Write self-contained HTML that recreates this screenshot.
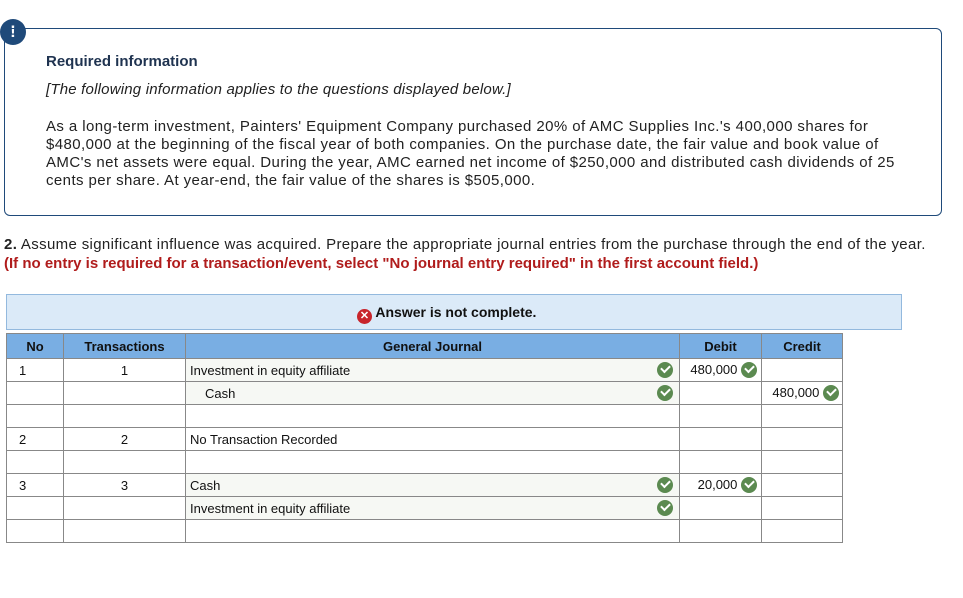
<!DOCTYPE html>
<html><head><style>
body{margin:0;width:963px;height:598px;background:#fff;font-family:"Liberation Sans",Arial,sans-serif;position:relative;overflow:hidden}
.box{position:absolute;left:4px;top:28px;width:936px;height:186px;border:1px solid #1f4a7a;border-radius:6px}
.ic{position:absolute;left:0;top:19px;width:26px;height:26px;border-radius:50%;background:#1f4a7a;color:#fff;font-weight:bold;font-size:17px;text-align:center;line-height:26px}
.t{position:absolute;color:#222;font-size:15px;white-space:nowrap}
table{position:absolute;left:6px;top:333px;border-collapse:collapse;font-size:13px;color:#111;table-layout:fixed;width:836px}
td{border:1px solid #888;height:23px;padding:0 4px;position:relative;white-space:nowrap;box-sizing:border-box}
th{background:#79aee3;border:1px solid #888;height:25px;font-weight:bold;font-size:13px;box-sizing:border-box}
.g{background:#f6f8f4}
.ck{display:inline-block;width:16px;height:16px;border-radius:50%;background:#5b8a50;vertical-align:middle;position:relative}
.ck:after{content:"";position:absolute;left:4px;top:3px;width:7px;height:4px;border-left:2px solid #fff;border-bottom:2px solid #fff;transform:rotate(-45deg)}
.r{position:absolute;right:6px;top:3px}
</style></head><body>
<div class="ic">!</div>
<div class="box"></div>
<div class="t" style="left:46px;top:53px;font-weight:bold;color:#1f3350">Required information</div>
<div class="t" style="left:46px;top:81px;font-style:italic;letter-spacing:0.2px">[The following information applies to the questions displayed below.]</div>
<div class="t" style="left:46px;top:118px;line-height:18px;letter-spacing:0.42px">As a long-term investment, Painters' Equipment Company purchased 20% of AMC Supplies Inc.'s 400,000 shares for<br>$480,000 at the beginning of the fiscal year of both companies. On the purchase date, the fair value and book value of<br>AMC's net assets were equal. During the year, AMC earned net income of $250,000 and distributed cash dividends of 25<br>cents per share. At year-end, the fair value of the shares is $505,000.</div>
<div class="t" style="left:4px;top:236px;letter-spacing:0.35px"><b>2.</b> Assume significant influence was acquired. Prepare the appropriate journal entries from the purchase through the end of the year.</div>
<div class="t" style="left:4px;top:255px;color:#b01c1c;font-weight:bold">(If no entry is required for a transaction/event, select "No journal entry required" in the first account field.)</div>
<div style="position:absolute;left:6px;top:294px;width:894px;height:34px;background:#dbeaf8;border:1px solid #93b9de"></div>
<div style="position:absolute;left:357px;top:304px;font-size:14px;font-weight:bold;color:#111"><span style="display:inline-block;width:15px;height:15px;border-radius:50%;background:#c8252c;color:#fff;font-size:11px;text-align:center;line-height:15px;vertical-align:-2px">✕</span> Answer is not complete.</div>
<table>
<colgroup><col style="width:57px"><col style="width:122px"><col style="width:494px"><col style="width:82px"><col style="width:81px"></colgroup>
<tr><th>No</th><th>Transactions</th><th>General Journal</th><th>Debit</th><th>Credit</th></tr>
<tr><td style="padding-left:12px">1</td><td style="text-align:center">1</td><td class="g">Investment in equity affiliate<span class="ck r"></span></td><td style="text-align:right">480,000 <span class="ck"></span></td><td></td></tr>
<tr><td></td><td></td><td class="g" style="padding-left:19px">Cash<span class="ck r"></span></td><td></td><td style="text-align:right;padding:0 3px">480,000 <span class="ck"></span></td></tr>
<tr><td></td><td></td><td></td><td></td><td></td></tr>
<tr><td style="padding-left:12px">2</td><td style="text-align:center">2</td><td>No Transaction Recorded</td><td></td><td></td></tr>
<tr><td></td><td></td><td></td><td></td><td></td></tr>
<tr><td style="padding-left:12px">3</td><td style="text-align:center">3</td><td class="g">Cash<span class="ck r"></span></td><td style="text-align:right">20,000 <span class="ck"></span></td><td></td></tr>
<tr><td></td><td></td><td class="g">Investment in equity affiliate<span class="ck r"></span></td><td></td><td></td></tr>
<tr><td></td><td></td><td></td><td></td><td></td></tr>
</table>
</body></html>
